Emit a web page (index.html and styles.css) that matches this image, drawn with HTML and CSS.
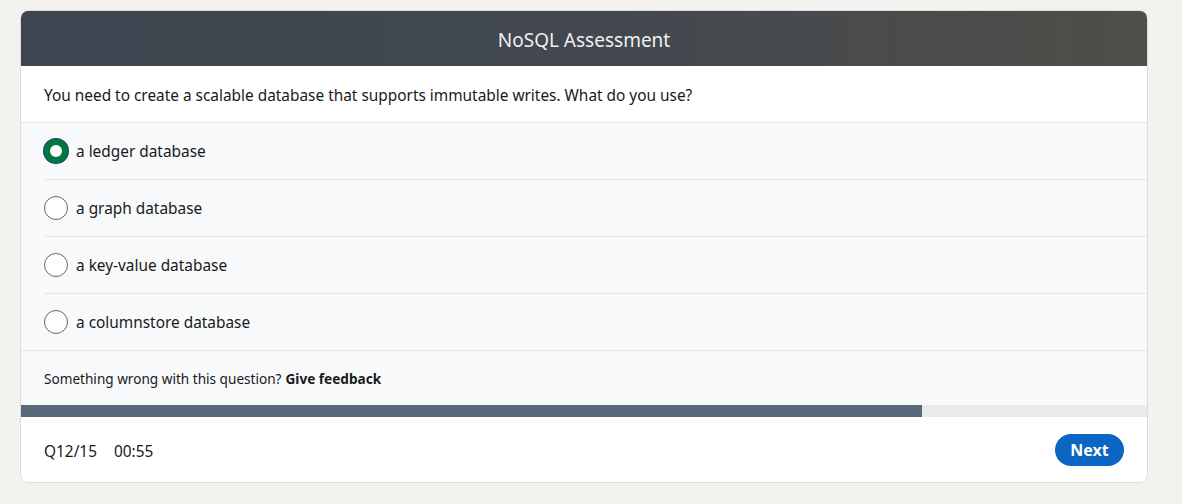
FILE: index.html
```html
<!DOCTYPE html>
<html>
<head>
<meta charset="utf-8">
<link rel="stylesheet" href="styles.css">
</head>
<body>
<div class="card">
  <div class="header">NoSQL Assessment</div>
  <div class="question">You need to create a scalable database that supports immutable writes. What do you use?</div>
  <ul class="options">
    <li class="option"><span class="radio checked"></span><span>a ledger database</span></li>
    <li class="option"><span class="radio"></span><span>a graph database</span></li>
    <li class="option"><span class="radio"></span><span>a key-value database</span></li>
    <li class="option last"><span class="radio"></span><span>a columnstore database</span></li>
  </ul>
  <div class="feedback">Something wrong with this question? <b>Give feedback</b></div>
  <div class="progress"><div class="fill" style="width:80%"></div></div>
  <div class="footer">
    <div class="meta"><span>Q12/15</span><span>00:55</span></div>
    <button class="next">Next</button>
  </div>
</div>
</body>
</html>
```
FILE: styles.css
```css
html, body { margin: 0; padding: 0; }
body {
  background: #f3f2ef;
  font-family: "Noto Sans", "Open Sans", sans-serif;
  color: #191919;
  padding: 10px 34px 0 20px;
}
.card {
  width: 1126px;
  background: #fff;
  border: 1px solid #dddcd9;
  border-radius: 8px;
  overflow: hidden;
}
.header {
  height: 56px;
  margin: -1px -1px 0 -1px;
  padding-top: 4px;
  box-sizing: border-box;
  background: linear-gradient(90deg, #3c4550 0%, #434850 50%, #4f4e48 100%);
  color: #f0f0f0;
  font-size: 19px;
  display: flex;
  align-items: center;
  justify-content: center;
  border-radius: 8px 8px 0 0;
}
.question {
  height: 57px;
  display: flex;
  align-items: center;
  padding-left: 23px;
  padding-top: 2px;
  box-sizing: border-box;
  font-size: 15.4px;
  border-bottom: 1px solid #e8e9eb;
}
.options {
  list-style: none;
  margin: 0;
  padding: 0 0 0 23px;
  background: #f8f9fb;
}
.option {
  height: 56px;
  display: flex;
  align-items: center;
  gap: 8px;
  font-size: 15.4px;
  border-bottom: 1px solid #e4e5e7;
}
.option.last { margin-left: -23px; padding-left: 23px; }
.radio {
  width: 24px;
  height: 24px;
  box-sizing: border-box;
  border-radius: 50%;
  border: 1px solid #666;
  background: #fff;
  flex: none;
}
.radio.checked {
  border: 6px solid #057642;
  box-shadow: 0 0 0 1px #0a4a6e;
}
.feedback {
  height: 54px;
  background: #f8f9fb;
  display: flex;
  align-items: center;
  padding-left: 23px;
  font-size: 13.6px;
}
.feedback b { margin-left: 4px; }
.progress {
  height: 12px;
  background: #eaeaea;
}
.fill {
  height: 100%;
  background: #56687a;
}
.footer {
  height: 65px;
  display: flex;
  align-items: center;
  justify-content: space-between;
  padding: 2px 23px 0;
  box-sizing: border-box;
}
.meta { display: flex; gap: 17px; font-size: 15.4px; margin-top: 1px; }
.next {
  background: #0a66c2;
  color: #fff;
  border: none;
  border-radius: 16px;
  height: 32px;
  width: 69px;
  font-family: inherit;
  font-size: 16px;
  font-weight: bold;
  padding: 0;
  margin-top: -1px;
}
```
